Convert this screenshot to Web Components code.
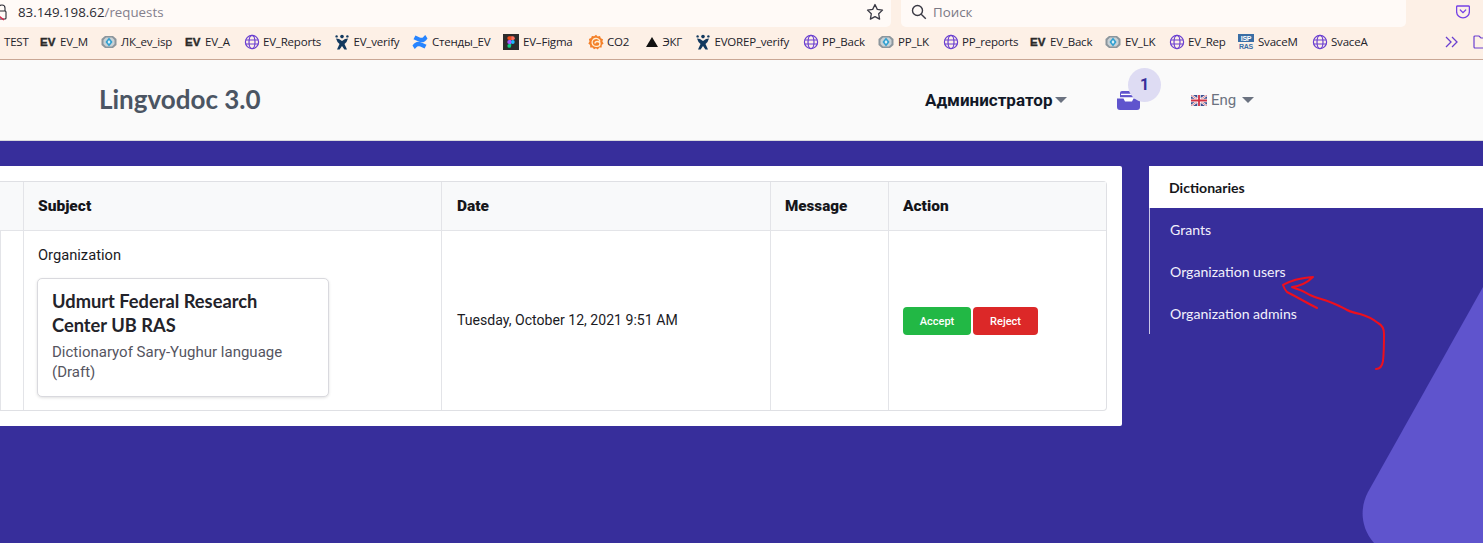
<!DOCTYPE html>
<html>
<head>
<meta charset="utf-8">
<title>Lingvodoc requests</title>
<style>
  html, body { margin: 0; padding: 0; height: 100%; overflow: hidden; background: #372e9b; }
  body { font-family: "Roboto", "Liberation Sans", sans-serif; }
</style>
</head>
<body>
<browser-toolbar></browser-toolbar>
<bookmark-bar>
  <book-mark w="36" text="TEST"></book-mark>
  <book-mark w="61" icon="ev" text="EV_M"></book-mark>
  <book-mark w="84" icon="lk" text="ЛК_ev_isp"></book-mark>
  <book-mark w="59" icon="ev" text="EV_A"></book-mark>
  <book-mark w="90" icon="globe" text="EV_Reports"></book-mark>
  <book-mark w="78" icon="jira" text="EV_verify"></book-mark>
  <book-mark w="91" icon="conf" text="Стенды_EV"></book-mark>
  <book-mark w="85" icon="figma" text="EV–Figma"></book-mark>
  <book-mark w="56" icon="grafana" text="CO2"></book-mark>
  <book-mark w="51" icon="tri" text="ЭКГ"></book-mark>
  <book-mark w="108" icon="jira" text="EVOREP_verify"></book-mark>
  <book-mark w="75" icon="globe" text="PP_Back"></book-mark>
  <book-mark w="65" icon="lk" text="PP_LK"></book-mark>
  <book-mark w="87" icon="globe" text="PP_reports"></book-mark>
  <book-mark w="75" icon="ev" text="EV_Back"></book-mark>
  <book-mark w="64" icon="lk" text="EV_LK"></book-mark>
  <book-mark w="69" icon="globe" text="EV_Rep"></book-mark>
  <book-mark w="74" icon="isp" text="SvaceM"></book-mark>
  <book-mark w="70" icon="globe" text="SvaceA"></book-mark>
</bookmark-bar>
<app-header></app-header>
<page-body>
  <requests-table></requests-table>
  <side-menu slot="side">
    <menu-link active>Dictionaries</menu-link>
    <menu-link>Grants</menu-link>
    <menu-link>Organization users</menu-link>
    <menu-link>Organization admins</menu-link>
  </side-menu>
</page-body>

<script>
const ICONS = {
  globe: `<svg viewBox="0 0 16 16" fill="none" stroke="#6a3fd0" stroke-width="1.2"><circle cx="8" cy="8" r="6.6"/><ellipse cx="8" cy="8" rx="3" ry="6.6"/><path d="M1.6 6h12.8M1.6 10h12.8"/></svg>`,
  lk: `<svg viewBox="0 0 16 16"><path d="M4 2h8l3.500 3v6L12 14H4l-3.500-3V5z" fill="#8b959c"/><path d="M5 3.500h6l2.500 2.500v4L11 12.500H5L2.500 10V6z" fill="#c9d2d6"/><path d="M8 3.500l3.500 4.500L8 12.500 4.500 8z" fill="#2f9fd0"/><path d="M8 6l1.500 2L8 10 6.500 8z" fill="#dff3fa"/></svg>`,
  jira: `<svg viewBox="0 0 16 16" fill="#12395f"><circle cx="8" cy="2.600" r="1.800"/><circle cx="2.600" cy="2.400" r="1.200"/><circle cx="13.400" cy="2.400" r="1.200"/><path d="M2 4.500l3 .5 3 2 3-2 3-.5-1.500 3.500L10.500 10l2.500 5.500h-2.600L8 12l-2.400 3.500H3L5.500 10 3.500 8z"/></svg>`,
  conf: `<svg viewBox="0 0 16 16" fill="#2684ff"><path d="M.5 11.500c3-4.500 6-4.500 9.500-2.800l4.500 2.100-1.900 3.800-4.300-2c-2-.9-3.200-.5-4.500 1.500L2.700 15z"/><path d="M15.500 4.500c-3 4.500-6 4.500-9.500 2.800L1.500 5.200 3.400 1.400l4.300 2c2 .9 3.200.5 4.500-1.500L13.300 1z"/></svg>`,
  figma: `<svg viewBox="0 0 16 16"><rect width="16" height="16" fill="#2c2c2c"/><circle cx="9.800" cy="8" r="1.900" fill="#1abcfe"/><path d="M6.200 10h2v1.900a1.900 1.900 0 1 1-2-1.900z" fill="#0acf83"/><path d="M4.300 8a1.900 1.900 0 0 1 1.900-1.900h2V10h-2A1.900 1.900 0 0 1 4.300 8z" fill="#a259ff"/><path d="M4.300 4.100a1.900 1.900 0 0 1 1.900-1.900h2v3.900h-2a1.900 1.900 0 0 1-1.900-2z" fill="#f24e1e"/><path d="M8.200 2.200h1.600a1.900 1.900 0 1 1 0 3.900H8.200z" fill="#ff7262"/></svg>`,
  grafana: `<svg viewBox="0 0 16 16"><path d="M8 .8l1.700 1.700 2.300-.4.800 2.200 2.200 1-.6 2.300 1.200 2-1.800 1.500-.2 2.400-2.400.1L9.800 15.400 8 14.200l-2 1.100-1.400-1.800-2.400-.1-.1-2.400L.3 9.400l1.200-2-.6-2.300 2.200-1 .8-2.200 2.300.4z" fill="#f4802a"/><path d="M12 7.500A4 4 0 1 0 9 12.300c2 0 3-1.300 3-2.600S10.800 7.500 9.200 7.500s-2.200 1-2.200 2" fill="none" stroke="#fff1d8" stroke-width="1.300"/></svg>`,
  tri: `<svg viewBox="0 0 16 16"><path d="M8 3l6 10H2z" fill="#111"/></svg>`,
  isp: `<svg viewBox="0 0 16 16"><rect width="16" height="8" fill="#3a6ea5"/><text x="8" y="6.800" font-size="7" font-weight="700" text-anchor="middle" fill="#fff" font-family="Liberation Sans">ISP</text><text x="8" y="15" font-size="7" font-weight="700" text-anchor="middle" fill="#3a6ea5" font-family="Liberation Sans">RAS</text></svg>`
};
const ICON_GAP = { globe: 3, jira: 3.5, grafana: 3, tri: 2.5 };

class BrowserToolbar extends HTMLElement {
  connectedCallback() {
    this.attachShadow({ mode: 'open' });
    this.shadowRoot.innerHTML = `
      <style>
        :host { display: flex; height: 27px; background: #fdf0e6; color: #2b2a33;
          font: 13.300px "Open Sans", "Noto Sans", sans-serif; }
        .url { width: 891px; box-sizing: border-box; background: #fffaf7; border-radius: 0 0 5px 0;
          display: flex; align-items: center; padding: 0 0 4px 18px; position: relative; }
        .url span { color: #84808d; }
        .lock { position: absolute; left: -3px; top: 3px; width: 10px; height: 18px; }
        .star { position: absolute; left: 866px; top: 3px; width: 18px; height: 18px; }
        .search { width: 505px; margin-left: 10px; box-sizing: border-box; background: #fffaf7;
          border-radius: 0 0 5px 5px; display: flex; align-items: center; gap: 6px;
          padding: 0 0 4px 10px; color: #7a7884; }
        .search svg { width: 16px; height: 16px; }
        .pocket { width: 14px; height: 14px; margin: 5px 0 0 50px; }
      </style>
      <div class="url">
        <svg class="lock" viewBox="0 0 10 18" fill="none" stroke="#2b2a33" stroke-width="1.100"><path d="M2 8V5a3 3 0 0 1 6 0v3"/><rect x="0" y="8" width="9" height="8" rx="1"/><path d="M-2 10l9 7" stroke="#d7264b" stroke-width="1.400"/></svg>
        83.149.198.62<span>/requests</span>
        <svg class="star" viewBox="0 0 18 18" fill="none" stroke="#3a3944" stroke-width="1.300" stroke-linejoin="round"><path d="M9 1.500l2.300 4.900 5.200.7-3.800 3.700.9 5.300L9 13.600l-4.600 2.500.9-5.300L1.500 7.100l5.200-.7z"/></svg>
      </div>
      <div class="search">
        <svg viewBox="0 0 16 16" fill="none" stroke="#3a3944" stroke-width="1.400"><circle cx="6.500" cy="6.500" r="5"/><path d="M10.200 10.200l4.600 4.600"/></svg>
        Поиск
      </div>
      <svg class="pocket" viewBox="0 0 14 14" fill="none" stroke="#7542e5" stroke-width="1.300"><path d="M1.500 1h11a1 1 0 0 1 .9 1v4.500a6.400 6.400 0 0 1-12.800 0V2a1 1 0 0 1 .9-1z"/><path d="M4.300 5L7 7.600 9.700 5" stroke-linecap="round"/></svg>
    `;
  }
}

class BookmarkBar extends HTMLElement {
  connectedCallback() {
    this.attachShadow({ mode: 'open' });
    this.shadowRoot.innerHTML = `
      <style>
        :host { display: flex; align-items: center; box-sizing: border-box; height: 33px;
          padding: 0 0 3px 4px; background: #fdf0e6; border-bottom: 1px solid #c9a795; position: relative; }
        .more { position: absolute; left: 1445px; top: 9px; width: 14px; height: 12px; }
        .folder { position: absolute; left: 1473px; top: 8px; width: 16px; height: 14px; }
      </style>
      <slot></slot>
      <svg class="more" viewBox="0 0 14 12" fill="none" stroke="#6a3fd0" stroke-width="1.300"><path d="M1 1l5 5-5 5M7 1l5 5-5 5"/></svg>
      <svg class="folder" viewBox="0 0 16 14" fill="none" stroke="#6a3fd0" stroke-width="1.200"><path d="M1 12V2a1 1 0 0 1 1-1h4l2 2h7a1 1 0 0 1 1 1v8a1 1 0 0 1-1 1H2a1 1 0 0 1-1-1z"/></svg>
    `;
  }
}

class BookMark extends HTMLElement {
  connectedCallback() {
    const icon = this.getAttribute('icon');
    const graphic = icon === 'ev' ? '<b>EV</b>' : (icon ? ICONS[icon] : '');
    this.attachShadow({ mode: 'open' });
    this.shadowRoot.innerHTML = `
      <style>
        :host { display: flex; align-items: center; flex: none; gap: ${ICON_GAP[icon] || 4}px; height: 18px;
          width: ${this.getAttribute('w')}px; font: 11.500px "Open Sans", "Noto Sans", sans-serif;
          color: #22222a; white-space: nowrap; letter-spacing: -.2px; }
        svg { width: 16px; height: 16px; flex: none; }
        b { width: 16px; flex: none; font: 900 11.500px "Liberation Sans", sans-serif; letter-spacing: .2px;
          color: #2a2a2a; -webkit-text-stroke: .4px #2a2a2a; }
      </style>
      ${graphic}<span>${this.getAttribute('text')}</span>
    `;
  }
}

class AppHeader extends HTMLElement {
  connectedCallback() {
    this.attachShadow({ mode: 'open' });
    this.shadowRoot.innerHTML = `
      <style>
        :host { display: flex; align-items: center; box-sizing: border-box; height: 81px;
          padding: 0 0 0 99px; background: #fafafa; border-bottom: 1px solid #d8d8dc; }
        .logo { font: 700 26px "Lato", sans-serif; color: #4b5563; width: 826px; padding-bottom: 2px; }
        .user { font: 700 17px "Roboto", sans-serif; color: #111827; width: 192px; white-space: nowrap; }
        .caret { display: inline-block; border: 6px solid transparent; border-top: 6px solid #6b7280;
          border-bottom: 0; margin-left: 3px; vertical-align: 3px; }
        .inbox { position: relative; width: 74px; height: 19px; }
        .inbox svg { width: 23px; height: 19px; display: block; }
        .badge { position: absolute; left: 11px; top: -23px; width: 33px; height: 34px; border-radius: 50%;
          background: #dedcf3; color: #372e9b; font: 700 16px/34px "Roboto", sans-serif; text-align: center; }
        .lang { display: flex; align-items: center; font: 15px "Roboto", sans-serif; color: #6b7280; }
        .lang svg { width: 16px; height: 11px; margin-right: 4px; }
        .lang .caret { margin-left: 6px; vertical-align: 0; }
      </style>
      <div class="logo">Lingvodoc 3.0</div>
      <div class="user">Администратор<i class="caret"></i></div>
      <div class="inbox">
        <svg viewBox="0 0 23 19"><path d="M3 2a2 2 0 0 1 2-2h13a2 2 0 0 1 2 2v5.500h3V16a3 3 0 0 1-3 3H3a3 3 0 0 1-3-3V7.500h3z" fill="#5f54cd"/><path d="M4 3.400h15" stroke="#fff" stroke-width="1.300"/><path d="M3 6.200h17v1.300h-3.500l-1.500 3H8l-1.500-3H3z" fill="#fff"/></svg>
        <div class="badge">1</div>
      </div>
      <div class="lang">
        <svg viewBox="0 0 16 11"><rect width="16" height="11" fill="#3d4f8f"/><path d="M0 0l16 11M16 0L0 11" stroke="#fff" stroke-width="2.200"/><path d="M0 0l16 11M16 0L0 11" stroke="#cf4a5a" stroke-width=".7"/><path d="M8 0v11M0 5.500h16" stroke="#fff" stroke-width="3.400"/><path d="M8 0v11M0 5.500h16" stroke="#cf3045" stroke-width="1.800"/></svg>
        Eng<i class="caret"></i>
      </div>
    `;
  }
}

class PageBody extends HTMLElement {
  connectedCallback() {
    this.attachShadow({ mode: 'open' });
    this.shadowRoot.innerHTML = `
      <style>
        :host { display: flex; position: relative; height: 402px; padding-top: 25px; box-sizing: border-box;
          background: #372e9b; overflow: hidden; align-items: flex-start; }
        .main { width: 1122px; flex: none; position: relative; z-index: 1; }
        .side { flex: 1; margin-left: 27px; position: relative; z-index: 1; }
        .shape { position: absolute; right: 0; bottom: 0; width: 121px; height: 260px; }
        .arrow { position: absolute; left: 1270px; top: 130px; width: 120px; height: 110px; z-index: 2; }
      </style>
      <svg class="shape" viewBox="0 0 121 260"><path d="M121 4L6 209C-2 224-2 244 12 260H121z" fill="#5f54cd"/></svg>
      <div class="main"><slot></slot></div>
      <div class="side"><slot name="side"></slot></div>
      <svg class="arrow" viewBox="0 0 120 110" fill="none" stroke="#ee0f1d" stroke-width="2" stroke-linejoin="round" stroke-linecap="round">
        <path d="M106 98C110 98 112 96 113 90 114 82 114 72 114 63 114 58 112 54 108 52 103 48 97 45 90 43 85 42 81 41 77 39 71 36 66 33 60 31 53 28 46 27 40 24 36 22 33 20 30 19 27 18 24 17 22 16 30 15 37 12 43 6 33 7 27 8 22 10 18 11 15 13 13 14 14 17 15 19 17 21 27 26 37 32 47 37"/>
      </svg>
    `;
  }
}

class RequestsTable extends HTMLElement {
  connectedCallback() {
    this.attachShadow({ mode: 'open' });
    this.shadowRoot.innerHTML = `
      <style>
        :host { display: block; box-sizing: border-box; height: 260px; padding: 15px 15px 15px 0;
          background: #fff; border-radius: 0 2px 2px 0; color: #1b1b1f; font: 14px "Roboto", sans-serif; }
        .table { height: 230px; box-sizing: border-box; border: 1px solid #dfe0e4; border-left: 0; border-radius: 0 4px 4px 0;
          display: grid; grid-template-columns: 23px 418px 329px 118px 1fr; grid-template-rows: 49px 1fr; }
        .th, .td { border-left: 1px solid #e3e4e8; padding-left: 14px; box-sizing: border-box; }
        .th { background: #f8f9fa; border-bottom: 1px solid #e3e4e8; font: 900 15.500px/49px "Roboto", sans-serif; color: #16161a; }
        .th:first-child, .td:first-of-type { border-left: 0; }
        .td { display: flex; align-items: center; }
        .subject { display: block; padding-top: 15px; }
        .subject p { margin: 0 0 14px; line-height: 18px; font-size: 14.700px; }
        .action { gap: 2px; }
        .date { padding: 0 0 2px 15px; font-size: 14.100px; }
        .th.date { padding: 0 0 0 15px; font-size: 15.500px; }
        .msg { font-size: 15.200px; }
      </style>
      <div class="table">
        <div class="th"></div><div class="th">Subject</div><div class="th date">Date</div><div class="th msg">Message</div><div class="th">Action</div>
        <div class="td"></div>
        <div class="td subject"><p>Organization</p><org-card></org-card></div>
        <div class="td date">Tuesday, October 12, 2021 9:51 AM</div>
        <div class="td"></div>
        <div class="td action"><flat-button color="#22b845" width="68">Accept</flat-button><flat-button color="#dc2828" width="65">Reject</flat-button></div>
      </div>
    `;
  }
}

class OrgCard extends HTMLElement {
  connectedCallback() {
    this.attachShadow({ mode: 'open' });
    this.shadowRoot.innerHTML = `
      <style>
        :host { display: block; box-sizing: border-box; width: 292px; height: 119px; margin-left: -1px;
          padding: 10px 30px 0 14px; border: 1px solid #d9d9de; border-radius: 5px; background: #fff;
          box-shadow: 0 1px 3px rgba(0,0,0,.12); }
        h3 { margin: 0 0 5px; font: 700 18.300px/24px "Lato", sans-serif; color: #23232a; }
        p { margin: 0; font: 15px/20px "Roboto", sans-serif; color: #55555f; }
      </style>
      <h3>Udmurt Federal Research Center UB RAS</h3>
      <p>Dictionaryof Sary-Yughur language (Draft)</p>
    `;
  }
}

class FlatButton extends HTMLElement {
  connectedCallback() {
    this.attachShadow({ mode: 'open' });
    this.shadowRoot.innerHTML = `
      <style>
        :host { display: block; width: ${this.getAttribute('width')}px; height: 28px; border-radius: 4px;
          background: ${this.getAttribute('color')}; color: #fff; text-align: center;
          font: 500 11px/29px "Roboto", sans-serif; }
      </style>
      <slot></slot>
    `;
  }
}

class SideMenu extends HTMLElement {
  connectedCallback() {
    this.attachShadow({ mode: 'open' });
    this.shadowRoot.innerHTML = `
      <style>
        :host { display: block; border-left: 1px solid #c9c7e6; }
      </style>
      <slot></slot>
    `;
  }
}

class MenuLink extends HTMLElement {
  connectedCallback() {
    const active = this.hasAttribute('active');
    this.attachShadow({ mode: 'open' });
    this.shadowRoot.innerHTML = `
      <style>
        :host { display: block; box-sizing: border-box; height: 42px; padding-left: 20px;
          font: ${active ? 700 : 400} 14.100px/43px "Lato", sans-serif;
          background: ${active ? '#fff' : 'transparent'}; color: ${active ? '#16161a' : '#f2f1fb'};
          margin-left: ${active ? '-1px' : '0'}; }
      </style>
      <slot></slot>
    `;
  }
}

customElements.define('browser-toolbar', BrowserToolbar);
customElements.define('bookmark-bar', BookmarkBar);
customElements.define('book-mark', BookMark);
customElements.define('app-header', AppHeader);
customElements.define('page-body', PageBody);
customElements.define('requests-table', RequestsTable);
customElements.define('org-card', OrgCard);
customElements.define('flat-button', FlatButton);
customElements.define('side-menu', SideMenu);
customElements.define('menu-link', MenuLink);
</script>
</body>
</html>
